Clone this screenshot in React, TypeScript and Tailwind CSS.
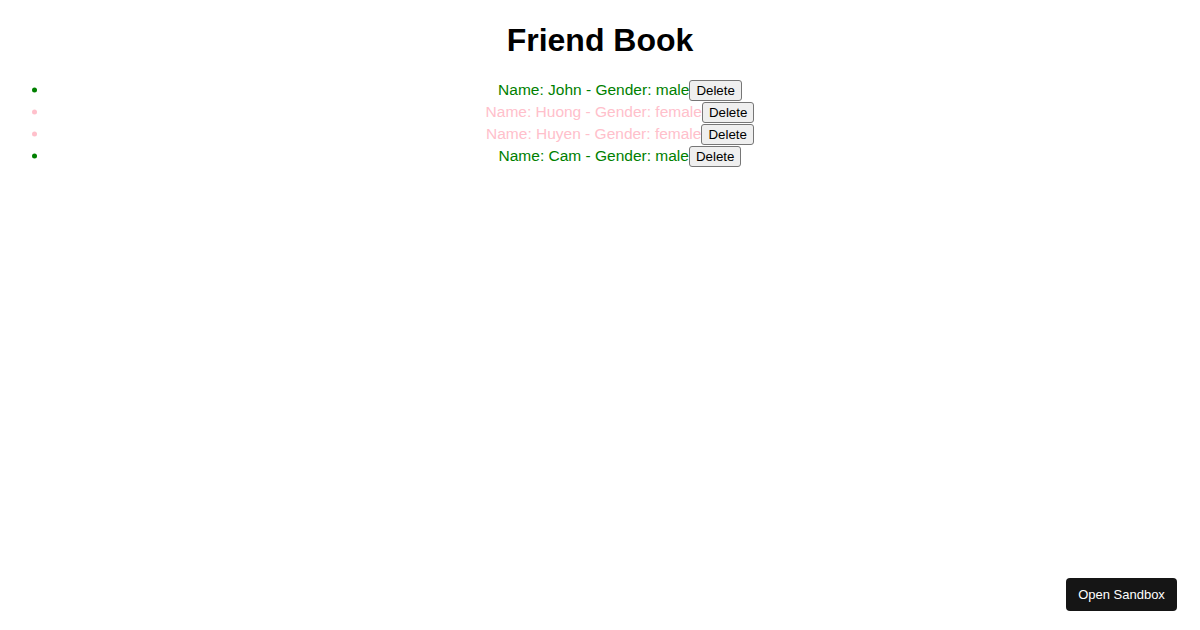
const friends = [
  { name: "John", gender: "male" },
  { name: "Huong", gender: "female" },
  { name: "Huyen", gender: "female" },
  { name: "Cam", gender: "male" },
];

export default function App() {
  return (
    <div className="min-h-[630px] bg-white text-center font-['Liberation_Sans',Arial,sans-serif] leading-[normal] text-black">
      <h1 className="mb-[20.5px] pt-[21.5px] text-[32px] font-bold">Friend Book</h1>
      <ul className="my-4 pl-10">
        {friends.map((f, i) => (
          <li
            key={i}
            className={
              "relative text-[15.5px] leading-[22px] " +
              (f.gender === "male" ? "text-[#008000]" : "text-[#ffc0cb]")
            }
          >
            <span className="absolute top-1/2 left-[-8.5px] size-[5px] -translate-y-1/2 rounded-full bg-current" />
            Name: {f.name} - Gender: {f.gender}
            <button
              type="button"
              className="rounded-[3px] border border-[#767676] bg-[#efefef] px-[6px] py-[2px] align-baseline text-[13.33px] leading-[normal] text-black"
            >
              Delete
            </button>
          </li>
        ))}
      </ul>
      <button
        type="button"
        className="fixed bottom-[19px] right-[23px] h-[33px] w-[111px] rounded-[4px] bg-[#151515] text-[13px] text-white"
      >
        Open Sandbox
      </button>
    </div>
  );
}
